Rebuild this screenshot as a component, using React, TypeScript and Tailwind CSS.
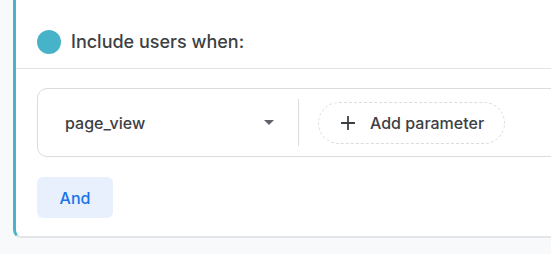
import React from 'react';

export default function App() {
  return (
    <main className="h-[254px] w-[551px] overflow-hidden bg-[#f8f9fa] pl-[13px] font-['Inter',sans-serif]">
      {/* audience condition card */}
      <section className="-mt-[8px] w-[600px] rounded-lg border-b-2 border-l-[3px] border-b-[#e3e5e8] border-l-[#4ab4cb] bg-white">
        <div className="flex items-center gap-[10px] border-b border-[#e0e3e7] pb-[14px] pl-[21px] pt-[38px]">
          <span className="h-6 w-6 rounded-full bg-[#47b3c9]" />
          <h2 className="text-[18px] leading-6 font-medium text-[#3c4043]">Include users when:</h2>
        </div>

        <div className="px-[21px] pb-[18px] pt-[19px]">
          {/* condition row */}
          <div className="flex h-[69px] items-center rounded-[10px] border border-[#dadce0]">
            <div className="flex w-[260px] items-center justify-between pl-[27px] pr-[24px]">
              <span className="text-[16px] font-medium text-[#3c4043]">page_view</span>
              <svg width="10" height="5" viewBox="0 0 10 5">
                <path d="M0 0h10L5 5z" fill="#5f6368" />
              </svg>
            </div>
            <div className="h-[47px] w-px bg-[#dadce0]" />
            <button className="ml-[19px] flex h-[42px] items-center gap-[14px] rounded-full border border-dashed border-[#dadce0] pl-[21px] pr-[20px] text-[16px] font-medium text-[#3c4043]">
              <svg width="16" height="16" viewBox="0 0 16 16">
                <path d="M8 1v14M1 8h14" stroke="#3c4043" strokeWidth="1.8" />
              </svg>
              Add parameter
            </button>
          </div>

          <button className="mt-[20px] h-[41px] w-[76px] rounded-md bg-[#e8f0fe] text-[16px] font-medium text-[#1a73e8]">
            And
          </button>
        </div>
      </section>
    </main>
  );
}
